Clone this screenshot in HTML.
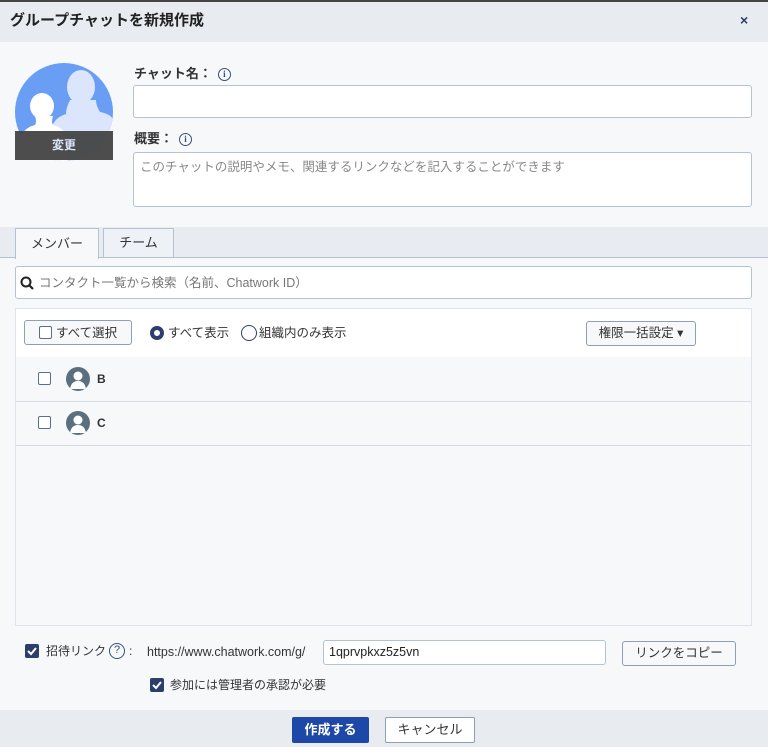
<!DOCTYPE html>
<html><head><meta charset="utf-8"><style>
*{box-sizing:border-box;margin:0;padding:0}
body{width:768px;height:747px;overflow:hidden;background:#f6f8fa;font-family:"Liberation Sans","Noto Sans CJK JP",sans-serif;color:#333;position:relative;font-size:13px;line-height:1.2}
.a{position:absolute}
.hd{left:0;top:0;width:768px;height:42px;background:#e8ecf0;border-top:2px solid #444}
.inp{background:#fff;border:1px solid #b5c2d2;border-radius:3px}
.lbl{font-weight:bold;font-size:13px}
.info{display:inline-block;width:13px;height:13px;border:1px solid #35507a;border-radius:50%;font-size:9px;text-align:center;line-height:11px;color:#35507a;font-family:"Liberation Serif",serif;margin-left:6px;vertical-align:1px}
.btn{background:#f6f8fa;border:1px solid #8f9eb3;border-radius:3px;text-align:center;font-size:12.5px}
.cb{width:13px;height:13px;border:1.5px solid #5b6e8a;border-radius:2px;background:#fff}
.cbk{width:14px;height:14px;background:#2c3e6b;border-radius:2px}
.av{width:24px;height:24px;border-radius:50%;background:#5a7080;overflow:hidden}
</style></head><body>
<div class="a hd"></div>
<div class="a" style="left:10px;top:12px;font-size:15px;font-weight:bold;color:#222">グループチャットを新規作成</div>
<div class="a" style="left:740px;top:12px;font-size:14px;font-weight:bold;color:#2c3e6b">×</div>

<svg class="a" style="left:14px;top:62px" width="100" height="100" viewBox="0 0 100 100">
<defs><clipPath id="c"><circle cx="50" cy="50" r="49"/></clipPath></defs>
<circle cx="50" cy="50" r="49" fill="#6a9ef5"/>
<g clip-path="url(#c)">
<ellipse cx="67" cy="25" rx="14" ry="17" fill="#dbe6fd"/>
<path d="M56 38q-4 8 -4 14q-10 3 -14 12v40h62V60q-2-8-14-10q-4-6-4-12z" fill="#dbe6fd"/>
<ellipse cx="28" cy="44" rx="12" ry="13" fill="#fff"/>
<path d="M21 54q2 6 0 9q-12 3-15 14v30h48V77q-3-11-15-14q-2-3 0-9z" fill="#fff"/>
</g></svg>
<div class="a" style="left:15px;top:131px;width:98px;height:29px;background:#444;opacity:.95;color:#dbe6fd;font-weight:bold;text-align:center;line-height:29px;font-size:12px">変更</div>

<div class="a lbl" style="left:134px;top:66px">チャット名：<span class="info">i</span></div>
<div class="a inp" style="left:133px;top:85px;width:619px;height:33px"></div>
<div class="a lbl" style="left:134px;top:131px">概要：<span class="info">i</span></div>
<div class="a inp" style="left:133px;top:152px;width:619px;height:55px"></div>
<div class="a" style="left:140px;top:160px;color:#888;font-size:12.5px">このチャットの説明やメモ、関連するリンクなどを記入することができます</div>

<div class="a" style="left:0;top:227px;width:768px;height:31px;background:#e8ecf0;border-bottom:1px solid #b5c2d2"></div>
<div class="a" style="left:15px;top:228px;width:84px;height:31px;background:#f6f8fa;border:1px solid #b5c2d2;border-bottom:none;text-align:center;line-height:29px;font-size:13px">メンバー</div>
<div class="a" style="left:103px;top:228px;width:71px;height:30px;background:#eef1f5;border:1px solid #b5c2d2;text-align:center;line-height:28px;font-size:13px">チーム</div>

<div class="a inp" style="left:15px;top:266px;width:737px;height:33px"></div>
<svg class="a" style="left:20px;top:276px" width="14" height="14" viewBox="0 0 14 14"><circle cx="6" cy="6" r="4.5" fill="none" stroke="#222" stroke-width="2"/><path d="M9 9l4 4" stroke="#222" stroke-width="2.2"/></svg>
<div class="a" style="left:39px;top:276px;color:#777;font-size:12.5px">コンタクト一覧から検索（名前、Chatwork ID）</div>

<div class="a" style="left:15px;top:308px;width:737px;height:318px;border:1px solid #dde3ea;background:#f6f8fa"></div>
<div class="a" style="left:16px;top:309px;width:735px;height:48px;background:#fff"></div>
<div class="a btn" style="left:24px;top:320px;width:108px;height:25px"></div>
<div class="a cb" style="left:39px;top:326px"></div>
<div class="a" style="left:56px;top:326px;font-size:12.5px">すべて選択</div>
<div class="a" style="left:150px;top:326px;width:14px;height:14px;border-radius:50%;background:#2c3e6b"><div style="margin:4px;width:6px;height:6px;border-radius:50%;background:#fff"></div></div>
<div class="a" style="left:168px;top:326px;font-size:12.5px">すべて表示</div>
<div class="a" style="left:241px;top:325px;width:16px;height:16px;border-radius:50%;border:1.5px solid #2c3e6b;background:#fff"></div>
<div class="a" style="left:259px;top:326px;font-size:12.5px">組織内のみ表示</div>
<div class="a btn" style="left:586px;top:321px;width:110px;height:25px;line-height:23px">権限一括設定 ▾</div>

<div class="a" style="left:16px;top:401px;width:735px;height:1px;background:#d5dce5"></div>
<div class="a" style="left:16px;top:445px;width:735px;height:1px;background:#d5dce5"></div>
<div class="a cb" style="left:38px;top:372px"></div>
<div class="a av" style="left:66px;top:367px"><svg width="24" height="24"><circle cx="12" cy="9" r="4.5" fill="#fff"/><path d="M4 22c1-6 4-8 8-8s7 2 8 8z" fill="#fff"/></svg></div>
<div class="a" style="left:97px;top:372px;font-weight:bold;font-size:12px">B</div>
<div class="a cb" style="left:38px;top:416px"></div>
<div class="a av" style="left:66px;top:411px"><svg width="24" height="24"><circle cx="12" cy="9" r="4.5" fill="#fff"/><path d="M4 22c1-6 4-8 8-8s7 2 8 8z" fill="#fff"/></svg></div>
<div class="a" style="left:97px;top:416px;font-weight:bold;font-size:12px">C</div>

<div class="a cbk" style="left:25px;top:644px"><svg width="14" height="14"><path d="M3 7l3 3 5-6" stroke="#fff" stroke-width="2" fill="none"/></svg></div>
<div class="a" style="left:46px;top:644px;font-size:12px">招待リンク</div>
<div class="a" style="left:109px;top:643px;width:16px;height:16px;border:1.5px solid #35507a;border-radius:50%;text-align:center;font-size:11px;line-height:13px;color:#35507a">?</div>
<div class="a" style="left:129px;top:644px;font-size:12px">:</div>
<div class="a" style="left:147px;top:645px;font-size:12.5px">https://www.chatwork.com/g/</div>
<div class="a inp" style="left:323px;top:640px;width:283px;height:25px"></div>
<div class="a" style="left:329px;top:645px;font-size:12.5px;color:#222">1qprvpkxz5z5vn</div>
<div class="a btn" style="left:622px;top:641px;width:114px;height:25px;line-height:23px">リンクをコピー</div>
<div class="a cbk" style="left:150px;top:678px"><svg width="14" height="14"><path d="M3 7l3 3 5-6" stroke="#fff" stroke-width="2" fill="none"/></svg></div>
<div class="a" style="left:170px;top:678px;font-size:12px">参加には管理者の承認が必要</div>

<div class="a" style="left:0;top:710px;width:768px;height:37px;background:#e8ecf0"></div>
<div class="a" style="left:292px;top:717px;width:77px;height:26px;background:#1e48a8;border-radius:2px;color:#fff;font-weight:bold;text-align:center;line-height:26px;font-size:13px">作成する</div>
<div class="a" style="left:385px;top:717px;width:90px;height:26px;background:#fff;border:1px solid #8f9eb3;border-radius:2px;text-align:center;line-height:24px;font-size:13px">キャンセル</div>
</body></html>
